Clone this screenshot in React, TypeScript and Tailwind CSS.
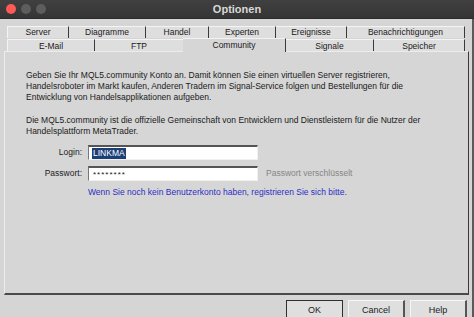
import React from "react";

const row1 = [
  { t: "Server", w: 62 },
  { t: "Diagramme", w: 77 },
  { t: "Handel", w: 63 },
  { t: "Experten", w: 67 },
  { t: "Ereignisse", w: 71 },
  { t: "Benachrichtigungen", w: 118 },
];
const row2 = [
  { t: "E-Mail", w: 88, sel: false },
  { t: "FTP", w: 88, sel: false },
  { t: "Community", w: 103, sel: true },
  { t: "Signale", w: 88, sel: false },
  { t: "Speicher", w: 91, sel: false },
];

export default function App() {
  return (
    <div
      className="w-[474px] h-[317px] overflow-hidden flex flex-col bg-[#d5d5d5] text-[#1a1a1a]"
      style={{ fontFamily: '"Liberation Sans", Arial, sans-serif' }}
    >
      {/* Title bar */}
      <div className="h-[19px] shrink-0 bg-gradient-to-b from-[#404040] to-[#353535] grid grid-cols-[1fr_auto_1fr] items-center border-b border-[#2a2a2a]">
        <div className="flex items-center gap-[5px] pl-[6px]">
          <span className="w-[10px] h-[10px] rounded-full bg-[#fe5b57]" />
          <span className="w-[10px] h-[10px] rounded-full bg-[#5d5d5d]" />
          <span className="w-[10px] h-[10px] rounded-full bg-[#5d5d5d]" />
        </div>
        <div className="text-[11px] font-bold text-[#d8d8d8] leading-none">Optionen</div>
        <div />
      </div>

      {/* Body */}
      <div className="flex-1 flex flex-col border-r-2 border-[#5a5a5a] pr-[3px] pl-[4px]">
        {/* Tabs */}
        <div className="mt-[7px] ml-[3px] mr-[2px] flex flex-col">
          <div className="flex h-[12px]">
            {row1.map((r, i) => (
              <div
                key={r.t}
                style={{ width: r.w }}
                className={
                  "h-full flex items-center justify-center text-[8.5px] leading-none bg-[#dedede] border-t border-[#f4f4f4] border-r border-r-[#3a3a3a] " +
                  (i === 0 ? "border-l border-l-[#f4f4f4]" : "")
                }
              >
                {r.t}
              </div>
            ))}
          </div>
          <div className="flex h-[13px] mt-[1px]">
            {row2.map((r, i) =>
              r.sel ? (
                <div
                  key={r.t}
                  style={{ width: r.w }}
                  className="h-[14px] -mt-[1px] flex items-center justify-center text-[8.5px] leading-none bg-[#d6d6d6] border-t border-[#f2f2f2] border-r border-r-[#3a3a3a] relative z-10"
                >
                  {r.t}
                </div>
              ) : (
                <div
                  key={r.t}
                  style={{ width: r.w }}
                  className={
                    "h-full flex items-center justify-center text-[8.5px] leading-none bg-[#dedede] border-t border-[#f4f4f4] " +
                    (i === 0 ? "border-l border-l-[#f4f4f4] " : "") +
                    (i === 1 ? "" : "border-r border-r-[#3a3a3a]")
                  }
                >
                  {r.t}
                </div>
              )
            )}
          </div>
        </div>

        {/* Panel */}
        <div className="h-[244px] -mt-[1px] border-l border-t border-[#ececec] border-r border-r-[#3a3a3a] border-b-2 border-b-[#4a4a4a] bg-[#d6d6d6] pl-[21px] pt-[18px] text-[8.5px] leading-[11px]">
          <p>
            Geben Sie Ihr MQL5.community Konto an. Damit können Sie einen virtuellen Server registrieren,
            <br />
            Handelsroboter im Markt kaufen, Anderen Tradern im Signal-Service folgen und Bestellungen für die
            <br />
            Entwicklung von Handelsapplikationen aufgeben.
          </p>
          <p className="mt-[12px]">
            Die MQL5.community ist die offizielle Gemeinschaft von Entwicklern und Dienstleistern für die Nutzer der
            <br />
            Handelsplattform MetaTrader.
          </p>

          <div className="mt-[8px] flex flex-col gap-[6px] -ml-[21px]">
            <div className="flex items-center h-[15px]">
              <div className="w-[78px] text-right pr-[1px]">Login:</div>
              <div className="ml-[5px] w-[170px] h-[15px] bg-white border-t-2 border-l border-t-[#555] border-l-[#777] border-b border-r border-b-[#f0f0f0] border-r-[#f0f0f0] flex items-center pl-[3px]">
                <span className="bg-[#1d3f77] text-white px-[1px] leading-[11px]">LINKMA</span>
              </div>
            </div>
            <div className="flex items-center h-[15px]">
              <div className="w-[78px] text-right pr-[1px]">Passwort:</div>
              <div className="ml-[5px] w-[170px] h-[15px] bg-white border-t-2 border-l border-t-[#555] border-l-[#777] border-b border-r border-b-[#f0f0f0] border-r-[#f0f0f0] flex items-center pl-[4px] tracking-[1px] text-[8px]">
                ********
              </div>
              <div className="ml-[8px] text-[#858585]">Passwort verschlüsselt</div>
            </div>
            <div className="ml-[83px] text-[#2d2dc4]">
              Wenn Sie noch kein Benutzerkonto haben, registrieren Sie sich bitte.
            </div>
          </div>
        </div>

        {/* Buttons */}
        <div className="flex justify-end gap-[5px] mt-[5px] pr-[2px]">
          <div className="w-[57px] h-[22px] bg-[#dfdfdf] border border-[#2f2f2f] flex items-start pt-[5px] justify-center text-[9px] leading-none">
            OK
          </div>
          <div className="w-[57px] h-[22px] bg-[#dfdfdf] border-t border-l border-[#f6f6f6] border-r-2 border-r-[#555] flex items-start pt-[5px] justify-center text-[9px] leading-none">
            Cancel
          </div>
          <div className="w-[57px] h-[22px] bg-[#dfdfdf] border-t border-l border-[#f6f6f6] border-r-2 border-r-[#555] flex items-start pt-[5px] justify-center text-[9px] leading-none">
            Help
          </div>
        </div>
      </div>
    </div>
  );
}
